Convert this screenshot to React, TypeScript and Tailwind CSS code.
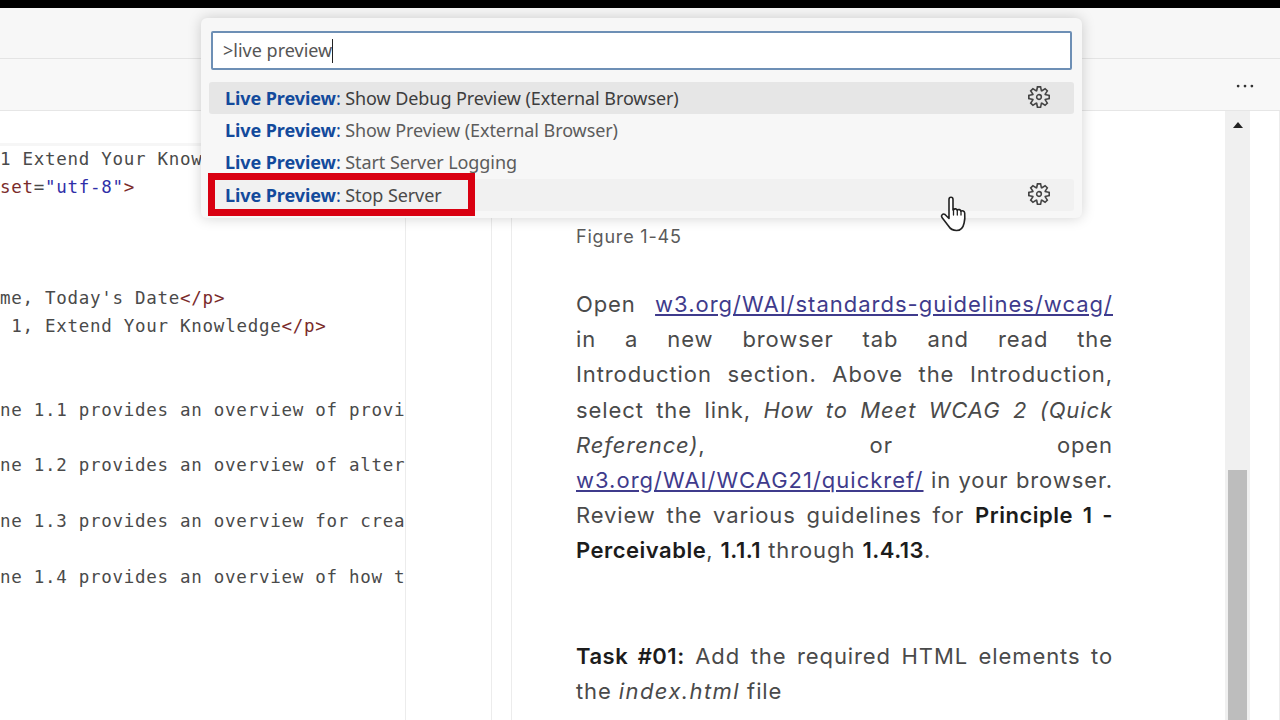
import React from 'react';
import { VscSettingsGear, VscEllipsis } from 'react-icons/vsc';

const uiFont = "font-['Noto_Sans','Open_Sans',sans-serif]";

const commands = [
  { label: 'Show Debug Preview (External Browser)', gear: true, bg: 'bg-[#e6e6e6]', color: 'text-[#3d3d3d]' },
  { label: 'Show Preview (External Browser)', gear: false, bg: '', color: 'text-[#5c5c5c]' },
  { label: 'Start Server Logging', gear: false, bg: '', color: 'text-[#5c5c5c]' },
  { label: 'Stop Server', gear: true, bg: 'bg-[#f1f1f1]', color: 'text-[#4a4a4a]' },
];

const Tag: React.FC<{ children: React.ReactNode }> = ({ children }) => (
  <span className="text-[#7a2b2b]">{children}</span>
);

const CodeLine: React.FC<{ children?: React.ReactNode }> = ({ children }) => (
  <div className="h-[27.85px] leading-[27.85px] whitespace-pre">{children}</div>
);

const Line: React.FC<{ children: React.ReactNode; last?: boolean }> = ({ children, last }) => (
  <div className={last ? 'h-[35.2px] whitespace-pre' : 'h-[35.2px] text-justify [text-align-last:justify]'}>
    {children}
  </div>
);

const Link: React.FC<{ children: React.ReactNode }> = ({ children }) => (
  <span className="text-[#3f3b8c] underline underline-offset-2 tracking-[1px]">{children}</span>
);

const Strong: React.FC<{ children: React.ReactNode }> = ({ children }) => (
  <b className="text-[#1c1c1c] font-semibold tracking-[0.5px]">{children}</b>
);

const HandCursor = () => (
  <svg width="30" height="38" viewBox="0 0 28 38" className="absolute left-[939px] top-[196px]">
    <path
      d="M9 3.500c0-3 4-3 4 0V14l.5-.3c1-1.400 3.400-1 3.800.6 1-1.300 3.300-.8 3.700.9 1.200-.9 3.500-.2 3.700 1.800.3 3.500.2 7-.6 10-.8 4-3.400 7.500-7.600 7.500-3.700 0-6.200-1.500-8-4.500L2 21.500c-1.500-2 .9-4.500 3-3l4 4V3.500z"
      fill="#ffffff"
      stroke="#222222"
      strokeWidth="1.600"
      strokeLinejoin="round"
    />
    <path d="M13.500 14v5M17.300 14.500V19M21 15.500V19" stroke="#222222" strokeWidth="1.300" strokeLinecap="round" fill="none" />
  </svg>
);

export default function App() {
  return (
    <div className="relative w-[1280px] h-[720px] overflow-hidden bg-white flex flex-col">
      {/* window chrome */}
      <div className="h-2 bg-black shrink-0" />
      <div className="h-[51px] bg-[#f7f7f7] border-b border-[#e4e4e4] shrink-0" />
      <div className="h-[52px] bg-[#f8f8f8] border-b border-[#e6e6e6] shrink-0 flex items-center justify-end pr-[24px] pt-[3px]">
        <VscEllipsis className="text-[22px] text-[#333333]" />
      </div>

      <div className="flex-1 flex min-h-0">
        {/* editor */}
        <div className="w-[406px] shrink-0 border-r border-[#ececec] overflow-hidden pt-[32px] font-['DejaVu_Sans_Mono',monospace] text-[17.500px] tracking-[0.72px] text-[#4a4a4a]">
          <div className="border-t-[3px] border-[#f6f6f6]">
            <CodeLine>1 Extend Your Knowledge</CodeLine>
          </div>
          <CodeLine>
            <Tag>set</Tag>=<span className="text-[#2f2fa8]">"utf-8"</span>
            <Tag>&gt;</Tag>
          </CodeLine>
          <CodeLine />
          <CodeLine />
          <CodeLine />
          <CodeLine>
            me, Today's Date<Tag>&lt;/p&gt;</Tag>
          </CodeLine>
          <CodeLine>
            {' '}1, Extend Your Knowledge<Tag>&lt;/p&gt;</Tag>
          </CodeLine>
          <CodeLine />
          <CodeLine />
          <CodeLine>ne 1.1 provides an overview of provi</CodeLine>
          <CodeLine />
          <CodeLine>ne 1.2 provides an overview of alter</CodeLine>
          <CodeLine />
          <CodeLine>ne 1.3 provides an overview for crea</CodeLine>
          <CodeLine />
          <CodeLine>ne 1.4 provides an overview of how t</CodeLine>
        </div>

        {/* minimap gutter */}
        <div className="w-[86px] shrink-0 border-r border-[#ececec]" />
        <div className="w-[20px] shrink-0 border-r border-[#ececec]" />

        {/* preview */}
        <div className="w-[713px] shrink-0 pl-[64px] overflow-hidden font-['Inter',sans-serif] text-[22px] tracking-[0.9px] leading-[35.2px] text-[#4a4a4a]">
          <div className="w-[537px]">
            <div className="pt-[112px] text-[18px] tracking-[0.8px] text-[#5a5a5a] leading-[28px]">Figure 1-45</div>
            <div className="pt-[36px]">
              <Line>
                Open <Link>w3.org/WAI/standards-guidelines/wcag/</Link>
              </Line>
              <Line>in a new browser tab and read the</Line>
              <Line>Introduction section. Above the Introduction,</Line>
              <Line>
                select the link, <em>How to Meet WCAG 2 (Quick</em>
              </Line>
              <Line>
                <em>Reference)</em>, or open
              </Line>
              <Line>
                <Link>w3.org/WAI/WCAG21/quickref/</Link> in your browser.
              </Line>
              <Line>
                Review the various guidelines for <Strong>Principle 1 -</Strong>
              </Line>
              <Line last>
                <Strong>Perceivable</Strong>, <Strong>1.1.1</Strong> through <Strong>1.4.13</Strong>.
              </Line>
            </div>
            <div className="pt-[70px]">
              <Line>
                <Strong>Task #01:</Strong> Add the required HTML elements to
              </Line>
              <Line last>
                the <em className="tracking-[1.4px]">index.html</em> file
              </Line>
            </div>
          </div>
        </div>

        {/* scrollbar */}
        <div className="w-[25px] shrink-0 bg-[#f0f0f0] flex flex-col items-center">
          <div className="mt-[11px] w-0 h-0 border-x-[5px] border-x-transparent border-b-[6px] border-b-[#222222]" />
          <div className="mt-[342px] w-[19px] flex-1 bg-[#bdbdbd]" />
        </div>
        <div className="flex-1 border-r border-[#ececec]" />
      </div>

      {/* command palette */}
      <div className={`absolute left-[201px] top-[18px] w-[881px] h-[200px] rounded-md bg-[#f7f7f7] shadow-[0_0_14px_rgba(0,0,0,0.18)] px-2 pt-[13px] ${uiFont}`}>
        <div className="mx-[2px] h-[39px] bg-white border-2 border-[#6d8fb5] rounded-[2px] flex items-center pl-[10px] text-[18px] text-[#555555]">
          &gt;live preview
          <span className="w-px h-[24px] bg-[#222222]" />
        </div>
        <div className="mt-[12px] flex flex-col">
          {commands.map((c) => (
            <div key={c.label} className={`h-[32.300px] rounded-[3px] flex items-center justify-between pl-[16px] pr-[24px] text-[18px] ${c.bg}`}>
              <span className={`${c.color} tracking-[-0.08px]`}>
                <span className="font-bold text-[#134a9c]">Live Preview</span>
                <span className="text-[#134a9c]">:</span> {c.label}
              </span>
              {c.gear && <VscSettingsGear className="text-[22px] text-[#444444] -translate-y-px" />}
            </div>
          ))}
        </div>
      </div>

      {/* highlight around the last command */}
      <div className="absolute left-[208px] top-[173px] w-[267px] h-[43px] border-[7px] border-[#d90011]" />
      <HandCursor />
    </div>
  );
}
